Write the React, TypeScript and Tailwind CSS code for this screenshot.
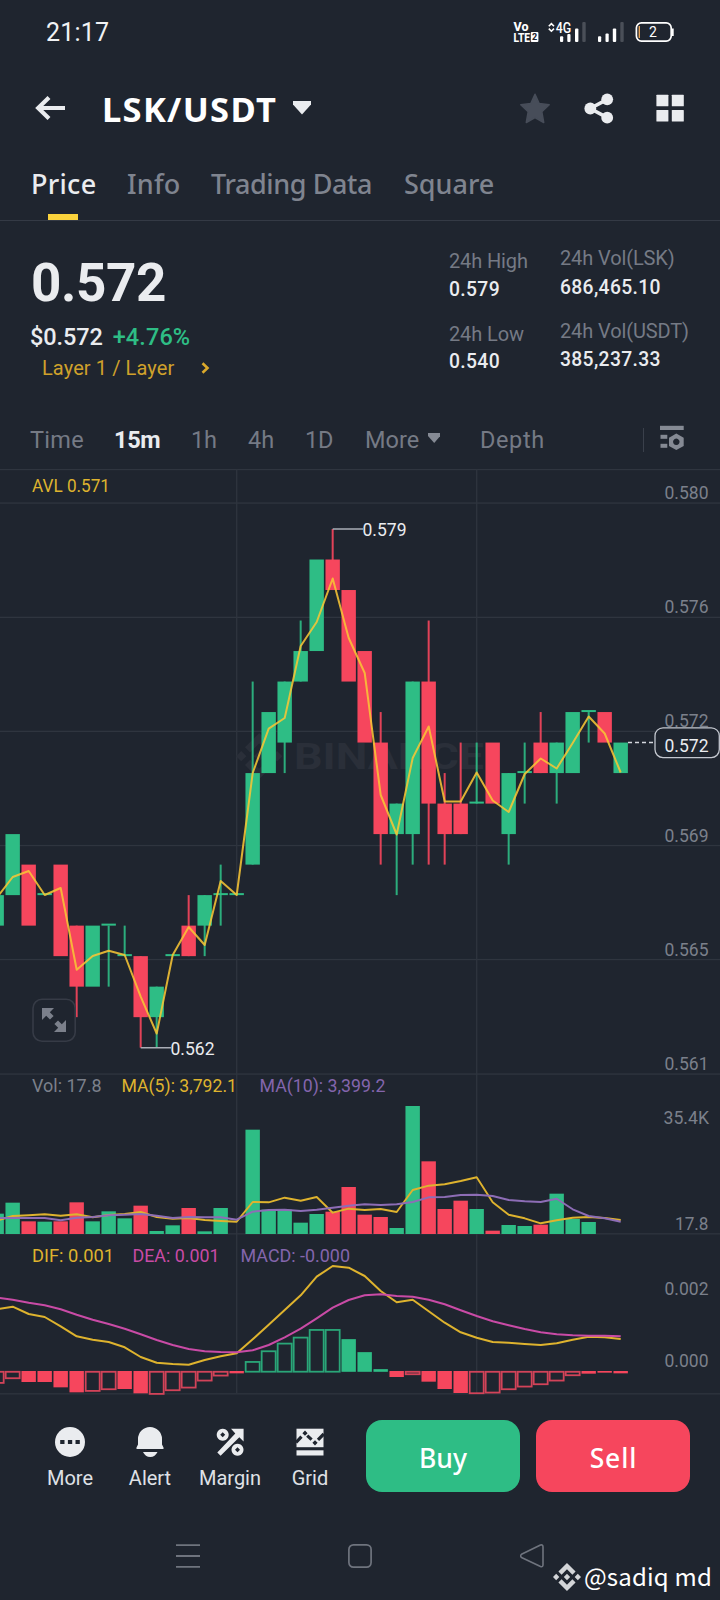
import type { ReactNode } from 'react';

const GREEN = '#2ebd85';
const RED = '#f6465d';
const GOLD = '#deb32e';
const PURPLE = '#8465ad';
const PINK = '#c94ba6';
const GRID = '#2f353f';
const MUTED = '#7b808b';

const STEP = 16;
const X0 = 12.67;
const cx = (k: number) => X0 + k * STEP;
const level = (n: number) => 529 + n * 30.51;

type Tone = 'g' | 'r';
type Candle = [Tone, number, number, number?, number?];

// tone, body top, body bottom, high, low (in price ticks below the session high)
const candles: Candle[] = [
  ['g', 12, 13],
  ['g', 10, 12],
  ['r', 11, 13],
  ['g', 12, 12],
  ['r', 11, 14],
  ['r', 13, 15, 13, 16],
  ['g', 13, 15],
  ['g', 13, 13, 13, 15],
  ['g', 14, 14, 13, 14],
  ['r', 14, 16, 14, 17],
  ['g', 15, 16, 15, 17],
  ['g', 14, 14],
  ['r', 13, 14, 12, 14],
  ['g', 12, 13, 12, 14],
  ['g', 12, 12, 11, 13],
  ['g', 12, 12],
  ['g', 8, 11, 5, 11],
  ['g', 6, 8],
  ['g', 5, 7, 5, 8],
  ['g', 4, 5, 3, 5],
  ['g', 1, 4],
  ['r', 1, 2, 0, 2],
  ['r', 2, 5],
  ['r', 4, 7],
  ['r', 7, 10, 6, 11],
  ['g', 9, 10, 9, 12],
  ['g', 5, 10, 5, 11],
  ['r', 5, 9, 3, 11],
  ['r', 9, 10, 8, 11],
  ['r', 9, 10, 7, 10],
  ['g', 9, 9, 7, 9],
  ['r', 7, 9],
  ['g', 8, 10, 8, 11],
  ['g', 8, 8, 7, 9],
  ['r', 7, 8, 6, 8],
  ['g', 7, 8, 7, 9],
  ['g', 6, 8],
  ['g', 6, 6, 6, 7],
  ['r', 6, 7],
  ['g', 7, 8],
];

const avl = [
  898, 877, 871, 895, 888, 969.7, 956, 950.7, 955, 996.7, 1033.5, 955, 927, 945, 881, 895, 773, 728.7, 718, 646, 622,
  578.5, 638, 673, 795, 834.5, 758, 726.5, 801.5, 801.5, 772.5, 800.5, 812, 774, 758.5, 768.5, 743, 716.5, 733.5, 772.5,
];

const volumes: [Tone, number][] = [
  ['g', 61], ['g', 94], ['r', 38], ['g', 37], ['r', 38], ['r', 95], ['g', 38], ['g', 68], ['g', 47], ['r', 85],
  ['g', 9], ['g', 26], ['r', 78], ['g', 8], ['g', 78], ['g', 0], ['g', 313], ['g', 73], ['g', 73], ['g', 34],
  ['g', 60], ['r', 67], ['r', 141], ['r', 58], ['r', 51], ['g', 18], ['g', 384], ['r', 218], ['r', 75], ['r', 100],
  ['g', 75], ['r', 10], ['g', 27], ['g', 24], ['r', 28], ['g', 121], ['g', 45], ['g', 36],
];

const ma5 = [
  482, 468, 466, 463, 467, 463, 472, 465, 462, 456, 471, 476, 474, 480, 483, 485, 426, 427, 413, 422, 411, 458, 446,
  450, 447, 456, 390, 377, 373, 363, 352, 427, 464, 475, 490, 481, 473, 471, 474, 480,
];
const ma10 = [
  474, 474, 474, 474, 481, 473, 471, 466, 464, 462, 467, 474, 471, 472, 472, 479, 455, 450, 449, 453, 449, 443, 437,
  433, 435, 433, 426, 412, 411, 405, 404, 408, 420, 424, 426, 416, 448, 468, 475, 485,
];
const dif = [
  748, 740, 762, 771, 799, 829, 839, 846, 862, 891, 908, 912, 914, 900, 889, 880, 838, 794, 750, 706, 650, 618, 623,
  648, 693, 727, 719, 754, 788, 817, 833, 846, 848, 852, 855, 850, 839, 830, 832, 837,
];
const dea = [
  713, 719, 728, 736, 748, 764, 779, 792, 806, 823, 840, 855, 867, 874, 876, 877, 871, 855, 832, 806, 775, 743, 720,
  706, 703, 708, 710, 719, 733, 751, 768, 784, 796, 807, 817, 823, 826, 827, 827, 829,
];

// [filled, signed size]; sizes are in thirds of a pixel
const macd: [boolean, number][] = [
  [false, -36], [false, -22], [true, -33], [true, -33], [true, -49], [true, -64], [false, -60], [false, -55],
  [true, -54], [true, -67], [false, -69], [false, -58], [false, -50], [false, -29], [false, -14], [true, -7],
  [false, 32], [false, 64], [false, 87], [false, 105], [false, 128], [false, 128], [true, 98], [true, 59], [true, 8],
  [true, -18], [false, -10], [true, -32], [true, -54], [true, -66], [false, -67], [false, -65], [false, -55],
  [false, -47], [false, -40], [false, -29], [false, -13], [true, -8], [true, -5], [true, -7],
];

const path = (ys: number[]) => ys.map((y, i) => `${cx(i - 1).toFixed(1)},${y}`).join(' ');
const thirds = (ys: number[]) => path(ys.map((y) => +(1060 + y / 3).toFixed(1)));

function Label({ x, y, w, fill, children }: { x: number; y: number; w: number; fill: string; children: string }) {
  return (
    <text x={x} y={y} textLength={w} lengthAdjust="spacingAndGlyphs" fill={fill} fontSize="18.2">
      {children}
    </text>
  );
}

const BINANCE_MARK =
  'M16.624 13.9202l2.7175 2.7154-7.353 7.353-7.353-7.352 2.7175-2.7164 4.6355 4.6595 4.6356-4.6595zm4.6366-4.6366L24 12l-2.7154 2.7164L18.5682 12l2.6924-2.7164zm-9.272.001l2.7163 2.6914-2.7164 2.7174v-.001L9.2721 12l2.7164-2.7154zm-9.2722-.001L5.4088 12l-2.6914 2.6924L0 12l2.7164-2.7164zM11.9885.0115l7.353 7.329-2.7174 2.7154-4.6356-4.6356-4.6355 4.6595-2.7174-2.7154 7.353-7.353z';

function Chart() {
  return (
    <svg width="720" height="926" viewBox="0 469 720 926" className="block" fontFamily="Roboto, sans-serif">
      {[469.5, 503, 617.3, 731.3, 845.5, 959.5, 1074, 1233.8, 1393.8].map((y) => (
        <rect key={y} x="0" y={y - 0.6} width="720" height="1.3" fill={GRID} />
      ))}
      {[236.67, 476.67].map((x) => (
        <rect key={x} x={x - 0.6} y="469" width="1.3" height="924" fill={GRID} />
      ))}

      <g fill="#2a2f39">
        <path d={BINANCE_MARK} transform="translate(236 733) scale(1.93)" />
        <text x="294" y="769" fontSize="36.5" fontWeight="700" textLength="190" lengthAdjust="spacingAndGlyphs">
          BINANCE
        </text>
      </g>

      {candles.map(([tone, top, bottom, high, low], i) => {
        const x = cx(i - 1);
        const fill = tone === 'g' ? GREEN : RED;
        const flat = top === bottom;
        return (
          <g key={i} fill={fill}>
            {high !== undefined && low !== undefined && (
              <rect x={x - 1} y={level(high)} width="2" height={level(low) - level(high)} opacity="0.9" />
            )}
            <rect
              x={x - 7.2}
              y={flat ? level(top) - 2 : level(top)}
              width="14.4"
              height={flat ? 2 : level(bottom) - level(top)}
            />
          </g>
        );
      })}
      <polyline points={path(avl)} fill="none" stroke="#f8c535" strokeOpacity="0.87" strokeWidth="2" strokeLinejoin="round" />

      <path d="M332.7 529H363M140.7 1047.8H171" stroke="#a9adb6" strokeWidth="1.5" />
      <Label x={362.5} y={536} w={44} fill="#eaecef">0.579</Label>
      <Label x={170.5} y={1055} w={44} fill="#eaecef">0.562</Label>
      <path d="M628 742.5H655" stroke="#d4d7dd" strokeWidth="1.3" strokeDasharray="4 3" />

      <Label x={32} y={492} w={78} fill={GOLD}>AVL 0.571</Label>
      {[
        ['0.580', 499.2], ['0.576', 613.4], ['0.572', 727.4], ['0.569', 842], ['0.565', 956], ['0.561', 1070],
        ['0.002', 1295.3], ['0.000', 1366.7],
      ].map(([t, y]) => (
        <Label key={t} x={664.5} y={y as number} w={44} fill={MUTED}>{t as string}</Label>
      ))}
      <Label x={663.5} y={1124} w={45.5} fill={MUTED}>35.4K</Label>
      <Label x={675} y={1230} w={33.5} fill={MUTED}>17.8</Label>
      <rect x="655" y="727.8" width="64.3" height="29.8" rx="8" fill="#1f252f" stroke="#c3c7cf" strokeWidth="1.3" />
      <Label x={664.5} y={752} w={44} fill="#eaecef">0.572</Label>

      <g>
        <rect x="33" y="999.2" width="42.2" height="42" rx="9" fill="#1f252f" stroke="#363b46" strokeWidth="1.6" />
        <g fill="#7b808b">
          <path d="M42 1008h12l-4.2 4.2 3.8 3.8-3.6 3.6-3.8-3.8-4.2 4.2z" />
          <path d="M66 1032h-12l4.2-4.2-3.8-3.8 3.6-3.6 3.8 3.8 4.2-4.2z" />
        </g>
      </g>

      {volumes.map(([tone, h], i) => (
        <rect key={i} x={cx(i - 1) - 7.2} y={1234 - h / 3} width="14.4" height={h / 3} fill={tone === 'g' ? GREEN : RED} />
      ))}
      <polyline points={thirds(ma5)} fill="none" stroke={GOLD} strokeWidth="1.9" strokeLinejoin="round" />
      <polyline points={thirds(ma10)} fill="none" stroke="#8d6db6" strokeWidth="1.9" strokeLinejoin="round" />
      <Label x={32} y={1092} w={69.5} fill={MUTED}>Vol: 17.8</Label>
      <Label x={121.5} y={1092} w={115.5} fill={GOLD}>MA(5): 3,792.1</Label>
      <Label x={259.5} y={1092} w={126} fill={PURPLE}>MA(10): 3,399.2</Label>

      {macd.map(([filled, s], i) => {
        const h = Math.abs(s) / 3;
        const x = cx(i - 1);
        const up = s > 0;
        const y = up ? 1371.8 - h : 1371;
        return filled ? (
          <rect key={i} x={x - 7.2} y={y} width="14.4" height={h} fill={up ? GREEN : RED} />
        ) : (
          <rect
            key={i}
            x={x - 7}
            y={y + 0.8}
            width="14"
            height={Math.max(h - 0.9, 1)}
            fill="none"
            stroke={up ? '#2aa678' : '#d24359'}
            strokeWidth="1.8"
          />
        );
      })}
      <polyline points={thirds(dif)} fill="none" stroke={GOLD} strokeWidth="2" strokeLinejoin="round" />
      <polyline points={thirds(dea)} fill="none" stroke={PINK} strokeWidth="2" strokeLinejoin="round" />
      <Label x={32} y={1261.7} w={82} fill={GOLD}>DIF: 0.001</Label>
      <Label x={132.5} y={1261.7} w={87} fill={PINK}>DEA: 0.001</Label>
      <Label x={240.5} y={1261.7} w={109.5} fill={PURPLE}>MACD: -0.000</Label>
    </svg>
  );
}

function StatusBar() {
  return (
    <div className="flex h-16 items-center pl-[46px] pr-[45px]">
      <span className="mt-0.5 text-[25px] leading-8 tracking-[0.2px] text-[#f1f2f4]">21:17</span>
      <svg width="28" height="24" viewBox="512 20 28 24" className="ml-auto" fill="#fff" fontFamily="Roboto, sans-serif" fontWeight="800">
        <text x="513.5" y="31.4" fontSize="12" textLength="15" lengthAdjust="spacingAndGlyphs">Vo</text>
        <text x="513.5" y="42" fontSize="13" textLength="16.5" lengthAdjust="spacingAndGlyphs">LTE</text>
        <rect x="530.8" y="32" width="7.6" height="10" rx="1" />
        <text x="532" y="40.4" fontSize="9" fill="#1f252f">2</text>
      </svg>
      <svg width="40" height="22" viewBox="547 21 40 22" className="ml-[7px]" fontFamily="Roboto, sans-serif">
        <path d="M548.8 26.3l2.6-2.6 2.6 2.6M548.8 28.6l2.6 2.6 2.6-2.6" fill="none" stroke="#fff" strokeWidth="1.6" />
        <g fill="#fff">
          <rect x="560" y="36.3" width="3.2" height="5.7" rx="1" />
          <rect x="567.3" y="34" width="3.2" height="8" rx="1" />
          <rect x="575" y="28.5" width="3.4" height="13.5" rx="1" />
          <rect x="582.3" y="22" width="3.4" height="20" rx="1" fill="#4a4f58" />
          <text x="555.8" y="33" fontSize="14" fontWeight="500" textLength="15.5" lengthAdjust="spacingAndGlyphs">4G</text>
        </g>
      </svg>
      <svg width="27" height="22" viewBox="598 21 27 22" className="ml-[11px]" fill="#fff">
        <rect x="598" y="36.3" width="3.2" height="5.7" rx="1" />
        <rect x="605.5" y="33.5" width="3.2" height="8.5" rx="1" />
        <rect x="612.8" y="28.5" width="3.4" height="13.5" rx="1" />
        <rect x="620.3" y="22" width="3.4" height="20" rx="1" fill="#4a4f58" />
      </svg>
      <svg width="40" height="22" viewBox="635 21 40 22" className="ml-[10px]" fontFamily="Roboto, sans-serif">
        <rect x="636.4" y="22.9" width="34.8" height="18.2" rx="5" fill="none" stroke="#fff" strokeWidth="1.7" />
        <rect x="638.6" y="26" width="1.4" height="12" fill="#e8a55a" />
        <path d="M672.8 28.5v7.5" stroke="#fff" strokeWidth="1.8" />
        <text x="649" y="37" fontSize="14" fill="#fff">2</text>
      </svg>
    </div>
  );
}

function Header() {
  return (
    <div className="flex h-[88px] items-center pl-[35px] pr-9">
      <svg width="30" height="24" viewBox="35 96 30 24" fill="none" stroke="#eaecef" strokeWidth="4.2">
        <path d="M65 108H38M49 97.5L38.2 108L49 118.5" />
      </svg>
      <h1 className="ml-[37px] mt-px w-[191px] font-['Noto_Sans'] text-[34.5px] font-bold leading-[44px] tracking-[1.3px] text-white">
        LSK/USDT
      </h1>
      <svg width="18" height="14" viewBox="293 101 18 14" fill="#eaecef">
        <path d="M293 101h18v3.6l-9 10l-9-10z" />
      </svg>
      <svg width="30" height="31" viewBox="520 92.5 30 31" className="ml-auto" fill="#474d59" stroke="#474d59" strokeWidth="1.5" strokeLinejoin="round">
        <path d="M535 93.8l4.2 9.2 10 1.2-7.4 6.9 1.9 10.9-8.7-4.9-8.7 4.9 1.9-10.9-7.4-6.9 10-1.2z" />
      </svg>
      <svg width="30" height="31" viewBox="584.5 92.5 30 31" className="ml-[33.5px]" fill="#eaecef">
        <circle cx="590.8" cy="108" r="5.9" />
        <circle cx="607.7" cy="98.8" r="5.9" />
        <circle cx="607.7" cy="117.2" r="5.9" />
        <path d="M607.7 98.8L590.8 108l16.9 9.2" fill="none" stroke="#eaecef" strokeWidth="3.6" />
      </svg>
      <svg width="28" height="28" viewBox="656 94 28 28" className="ml-[42.5px]" fill="#eaecef">
        <rect x="656.4" y="94.7" width="12" height="11.6" rx="0.6" />
        <rect x="671.8" y="94.7" width="12" height="11.6" rx="0.6" />
        <rect x="656.4" y="110" width="12" height="11.6" rx="0.6" />
        <rect x="671.8" y="110" width="12" height="11.6" rx="0.6" />
      </svg>
    </div>
  );
}

function Tabs() {
  return (
    <nav className="relative flex h-[69px] border-b border-[#343a45] pl-[31px] pt-[14px] font-['Noto_Sans'] text-[27px] font-medium leading-9 text-[#7f848f]">
      <span className="w-24 tracking-[0.3px] text-[#eaecef]">Price</span>
      <span className="w-[84px] tracking-[0.2px]">Info</span>
      <span className="w-[193px] tracking-[-0.4px]">Trading Data</span>
      <span>Square</span>
      <i className="absolute bottom-0 left-12 h-1.5 w-[30px] bg-[#fad23c]" />
    </nav>
  );
}

function Stat({ label, value, gap }: { label: string; value: string; gap: string }) {
  return (
    <div className="h-[72.5px]">
      <div className="text-[20px] leading-6 tracking-[-0.12px] text-[#757a85]">{label}</div>
      <div className={`${gap} text-[19.3px] font-medium leading-6 tracking-[0.35px] text-[#eaecef]`}>{value}</div>
    </div>
  );
}

function Summary() {
  return (
    <section className="flex h-[188px] pl-[31px]">
      <div className="w-[418px] pt-[32px]">
        <div className="text-[53px] font-bold leading-[60px] tracking-[-0.4px] text-[#eaecef]">0.572</div>
        <div className="mt-[10px] flex gap-[10px] text-[23.5px] font-medium leading-7">
          <span className="-ml-px tracking-[-0.1px] text-[#eaecef]">$0.572</span>
          <span className="tracking-[0.1px] text-[#2ebd85]">+4.76%</span>
        </div>
        <div className="mt-[5px] flex items-center pl-[11px] text-[20px] leading-6 tracking-[0.1px] text-[#cfa12b]">
          Layer 1 / Layer
          <svg width="9" height="12" viewBox="0 0 9 12" className="ml-[27px]" fill="none" stroke="#dba92b" strokeWidth="2.6">
            <path d="M1.5 1.2L6.5 6L1.5 10.8" />
          </svg>
        </div>
      </div>
      <div className="w-[111px] pt-[28px]">
        <Stat label="24h High" value="0.579" gap="mt-[5px]" />
        <Stat label="24h Low" value="0.540" gap="mt-1" />
      </div>
      <div className="pt-[25px]">
        <Stat label="24h Vol(LSK)" value="686,465.10" gap="mt-[6px]" />
        <Stat label="24h Vol(USDT)" value="385,237.33" gap="mt-[5px]" />
      </div>
    </section>
  );
}

function Intervals() {
  return (
    <div className="flex h-[60px] items-center pl-[30px] pr-[35px] pt-px text-[23.5px] leading-7 text-[#757a85]">
      <span className="w-[84px] tracking-[0.3px]">Time</span>
      <span className="w-[77px] font-bold tracking-[-0.3px] text-[#eaecef]">15m</span>
      <span className="w-[57px] tracking-[-0.2px]">1h</span>
      <span className="w-[57px]">4h</span>
      <span className="w-[60px] tracking-[-0.3px]">1D</span>
      <span className="w-[63px]">More</span>
      <svg width="12" height="10" viewBox="428 433 12 10" className="-mt-1" fill="#858a94">
        <path d="M428 433h12.3v3l-6.1 7l-6.2-7z" />
      </svg>
      <span className="ml-10 tracking-[0.6px]">Depth</span>
      <i className="ml-auto h-6 w-px bg-[#3a404b]" />
      <svg width="25" height="25" viewBox="660 426 25 25" className="-mt-1 ml-4" fill="#858a94">
        <rect x="660" y="426.8" width="23.7" height="4.2" />
        <rect x="660.5" y="435.8" width="6.8" height="4" />
        <rect x="660.5" y="444.8" width="6.8" height="4" />
        <path fillRule="evenodd" d="M676.3 434.5l7.4 4.2v8.2l-7.4 4.1-7.3-4.1v-8.2zM676.3 439.6a3.2 3.2 0 1 0 .01 0z" />
      </svg>
    </div>
  );
}

function Action({ label, children }: { label: string; children: ReactNode }) {
  return (
    <div className="flex w-20 flex-col items-center">
      <svg width="30" height="30" viewBox="0 0 30 30" fill="#eaecef">
        {children}
      </svg>
      <span className="mt-[9px] text-[20px] leading-6 text-[#dfe1e6]">{label}</span>
    </div>
  );
}

function BottomBar() {
  return (
    <div className="flex h-[117px] pl-[30px]">
      <div className="flex pt-8">
        <Action label="More">
          <circle cx="15" cy="15" r="15" />
          <path d="M5.2 13h4.3v4h-4.3zM12.9 13h4.3v4h-4.3zM20.5 13h4.3v4h-4.3z" fill="#1f252f" />
        </Action>
        <Action label="Alert">
          <path d="M3 17.5V12a12 12 0 0 1 24 0v5.5l1.500 3V22h-27v-1.500z" />
          <path d="M8 25h14.500c-1.500 3-4 5-7.250 5s-5.750-2-7.250-5z" />
        </Action>
        <Action label="Margin">
          <path fillRule="evenodd" d="M7.700 1.800a6 6 0 1 0 .01 0zM7.700 5.300l2.500 2.500-2.500 2.500-2.500-2.500z" />
          <path fillRule="evenodd" d="M22.500 16.800a6 6 0 1 0 .01 0zM22.500 20.300l2.500 2.500-2.500 2.500-2.500-2.500z" />
          <path d="M16 1.800h12.600v12.700l-4.300-4.200L5.600 28.800l-3.300-3.300L20.300 6.500z" />
        </Action>
        <Action label="Grid">
          <rect x="1.500" y="1.700" width="27" height="18.500" />
          <rect x="1.500" y="23.300" width="27" height="5.200" />
          <path d="M1 15.500L6.500 9.700M28.800 7L23 12.800M12.200 8.600L16.600 12.600" fill="none" stroke="#1f252f" strokeWidth="3.200" />
          <path d="M10 3.600l2.600 2.600-2.600 2.600-2.600-2.600zM20 13.200l2.600 2.600-2.600 2.600-2.600-2.600z" fill="#1f252f" />
        </Action>
      </div>
      <div className="ml-4 flex gap-4 pt-[25px] font-['Noto_Sans'] text-[26.5px] font-medium text-white">
        <button className="h-[72px] w-[154px] rounded-[16px] bg-[#2ebd85] pt-px leading-[74px]">Buy</button>
        <button className="h-[72px] w-[154px] rounded-[16px] bg-[#f6465d] pl-px pt-px leading-[74px] tracking-[0.9px]">Sell</button>
      </div>
    </div>
  );
}

function SystemNav() {
  return (
    <div className="flex h-[88px] items-center pl-[176px]">
      <svg width="24" height="24" viewBox="0 0 24 24" stroke="#6f747e" strokeWidth="1.8">
        <path d="M0 1.200h24M0 12h24M0 22.800h24" />
      </svg>
      <svg width="24" height="24" viewBox="0 0 24 24" className="ml-[148px]" fill="none" stroke="#6f747e" strokeWidth="1.7">
        <rect x="0.900" y="0.900" width="22.200" height="22.200" rx="4.500" />
      </svg>
      <svg width="24" height="24" viewBox="520 1544 24 24" className="ml-[148px]" fill="none" stroke="#6f747e" strokeWidth="1.6" strokeLinejoin="round">
        <path d="M521.500 1554.300L540.500 1545Q543 1544.300 543 1547V1564.500Q543 1567.500 540.500 1566.500L521.500 1557.500Q519.800 1556 521.500 1554.300z" />
      </svg>
    </div>
  );
}

export default function App() {
  return (
    <div className="relative h-[1600px] w-[720px] overflow-hidden bg-[#1f252f] font-['Roboto',sans-serif]">
      <StatusBar />
      <Header />
      <Tabs />
      <Summary />
      <Intervals />
      <Chart />
      <BottomBar />
      <SystemNav />
      <div className="absolute bottom-[5px] right-[8px] flex items-center gap-[3px]">
        <svg width="28" height="28" viewBox="0 0 24 24" fill="#d3d5d8">
          <path d={BINANCE_MARK} />
        </svg>
        <span className="-mt-0.5 font-['Noto_Sans_CJK_SC'] text-[24px] leading-[38px] tracking-[0.2px] text-white">@sadiq md</span>
      </div>
    </div>
  );
}
